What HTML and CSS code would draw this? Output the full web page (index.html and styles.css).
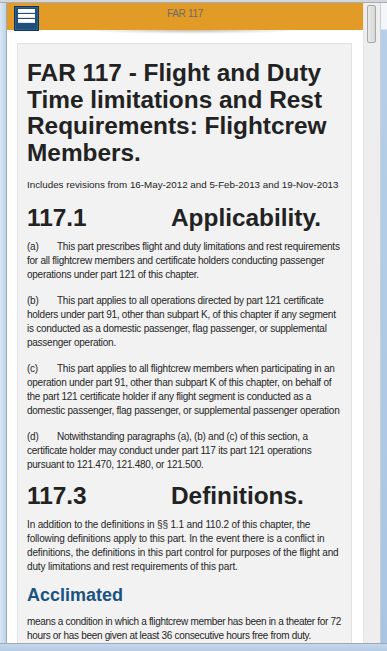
FILE: index.html
```html
<!DOCTYPE html>
<html lang="en">
<head>
<meta charset="utf-8">
<title>FAR 117</title>
<link rel="stylesheet" href="styles.css">
</head>
<body>
<div class="window">
  <div class="frame-top"></div>
  <div class="frame-mid">
    <div class="frame-left"></div>
    <div class="viewport">
      <header class="appbar">
        <button class="menu-btn" type="button" aria-label="Menu"><span class="bar"></span><span class="bar"></span><span class="bar"></span></button>
        <div class="appbar-title">FAR 117</div>
      </header>
      <main class="content">
        <article class="panel">
          <h1 class="doc-title">FAR 117 - Flight and Duty Time limitations and Rest Requirements: Flightcrew Members.</h1>
          <p class="revisions">Includes revisions from 16-May-2012 and 5-Feb-2013 and 19-Nov-2013</p>

          <h2 class="section"><span class="section-num">117.1</span>Applicability.</h2>
          <p class="para"><span class="para-label">(a)</span>This part prescribes flight and duty limitations and rest requirements for all flightcrew members and certificate holders conducting passenger operations under part 121 of this chapter.</p>
          <p class="para"><span class="para-label">(b)</span>This part applies to all operations directed by part 121 certificate holders under part 91, other than subpart K, of this chapter if any segment is conducted as a domestic passenger, flag passenger, or supplemental passenger operation.</p>
          <p class="para"><span class="para-label">(c)</span>This part applies to all flightcrew members when participating in an operation under part 91, other than subpart K of this chapter, on behalf of the part 121 certificate holder if any flight segment is conducted as a domestic passenger, flag passenger, or supplemental passenger operation</p>
          <p class="para"><span class="para-label">(d)</span>Notwithstanding paragraphs (a), (b) and (c) of this section, a certificate holder may conduct under part 117 its part 121 operations pursuant to 121.470, 121.480, or 121.500.</p>

          <h2 class="section"><span class="section-num">117.3</span>Definitions.</h2>
          <p class="para para-intro">In addition to the definitions in §§ 1.1 and 110.2 of this chapter, the following definitions apply to this part. In the event there is a conflict in definitions, the definitions in this part control for purposes of the flight and duty limitations and rest requirements of this part.</p>

          <h3 class="term">Acclimated</h3>
          <p class="para para-definition">means a condition in which a flightcrew member has been in a theater for 72 hours or has been given at least 36 consecutive hours free from duty.</p>
        </article>
      </main>
    </div>
    <div class="scrollbar"><div class="thumb"></div></div>
    <div class="frame-right"></div>
  </div>
  <div class="frame-bottom"></div>
</div>
</body>
</html>
```

FILE: styles.css
```css
* { box-sizing: border-box; }

html, body {
  margin: 0;
  padding: 0;
  width: 387px;
  height: 651px;
  overflow: hidden;
  background: #c9dbee;
  font-family: "Liberation Sans", Arial, sans-serif;
}

.window {
  width: 387px;
  height: 651px;
  display: flex;
  flex-direction: column;
}

.frame-top {
  height: 3px;
  flex: none;
  background: #d3d6da;
  border-bottom: 1px solid #a9adb2;
}

.frame-mid {
  flex: 1;
  min-height: 0;
  display: flex;
}

.frame-left {
  width: 7px;
  flex: none;
  background: linear-gradient(to right, #dbe7f4, #bdd3ea);
  border-right: 1px solid #9fa9b4;
}

.frame-right {
  width: 7px;
  flex: none;
  background: linear-gradient(to bottom, #f4f6f9 0, #f4f6f9 26px, #b7cfe8 27px, #a9c5e3 100%);
  border-left: 1px solid #c9ced4;
}

.frame-bottom {
  height: 8px;
  flex: none;
  background: linear-gradient(to bottom, #9fa8b2 0, #9fa8b2 1px, #c4d7ec 1px, #b4cbe4 100%);
}

.viewport {
  flex: 1;
  min-width: 0;
  display: flex;
  flex-direction: column;
  background: #ffffff;
}

.appbar {
  position: relative;
  height: 27px;
  flex: none;
  background: #e39b27;
  display: grid;
  grid-template-columns: 1fr auto 1fr;
  align-items: start;
}

.appbar::after {
  content: "";
  position: absolute;
  left: 22%;
  right: 18%;
  bottom: -4px;
  height: 4px;
  background: radial-gradient(ellipse at top, rgba(90, 60, 20, 0.35), rgba(0, 0, 0, 0) 70%);
}

.menu-btn {
  justify-self: start;
  margin: 3px 0 0 7px;
  width: 25px;
  height: 25px;
  padding: 2px 3px 0;
  border: 1px solid #123455;
  background: #1f4f7c;
  box-shadow: inset 0 0 0 1px #2d628f;
  display: flex;
  flex-direction: column;
  gap: 1px;
  cursor: pointer;
}

.menu-btn .bar {
  display: block;
  height: 4px;
  width: 100%;
  background: linear-gradient(to bottom, #ffffff 0, #ffffff 60%, #d6d9dd 100%);
}

.appbar-title {
  grid-column: 2;
  padding-top: 5px;
  font-size: 10px;
  line-height: 12px;
  letter-spacing: -0.3px;
  color: #6c6c6c;
}

.content {
  flex: 1;
  min-height: 0;
  overflow: hidden;
  padding: 13px 11px 0 10px;
}

.panel {
  background: #f2f2f2;
  border: 1px solid #e2e2e2;
  padding: 16px 7px 20px 9px;
  color: #222222;
}

.doc-title {
  margin: 0;
  font-size: 24.4px;
  line-height: 26.7px;
  font-weight: bold;
  color: #222222;
}

.revisions {
  margin: 11px 0 14px;
  font-size: 9.8px;
  line-height: 14px;
}

.section {
  margin: -2px 0 8px;
  font-size: 24.4px;
  line-height: 28px;
  font-weight: bold;
  color: #222222;
}

.section-num {
  display: inline-block;
  width: 144px;
}

.para {
  margin: 0 0 12px;
  font-size: 10px;
  line-height: 14px;
  letter-spacing: -0.25px;
  color: #262626;
}

.para-intro {
  letter-spacing: -0.15px;
}

.para-definition {
  letter-spacing: -0.32px;
}

.para-label {
  display: inline-block;
  min-width: 30px;
}

.term {
  margin: -2px 0 9px;
  font-size: 18px;
  line-height: 22px;
  font-weight: bold;
  color: #1b5380;
}

.scrollbar {
  width: 17px;
  flex: none;
  background: #eeeeee;
  border-left: 1px solid #e4e4e4;
  padding: 2px 4px 0 3px;
}

.thumb {
  height: 38px;
  border: 1px solid #a9a9a9;
  border-radius: 2px;
  background: linear-gradient(to right, #e8e8e8, #d7d7d7);
}
```
